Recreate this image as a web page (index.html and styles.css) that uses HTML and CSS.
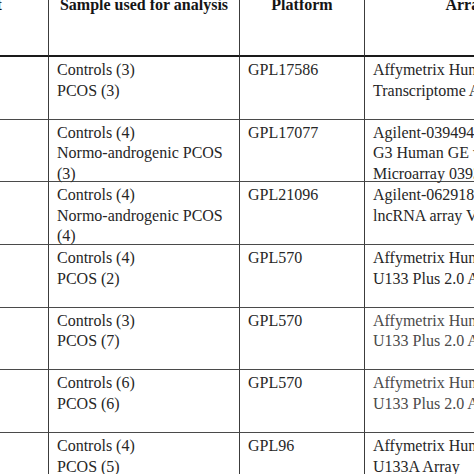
FILE: index.html
```html
<!DOCTYPE html>
<html lang="en">
<head>
<meta charset="utf-8">
<title>Datasets</title>
<link rel="stylesheet" href="styles.css">
</head>
<body>
<div class="table">
  <div class="cell head">Dataset</div>
  <div class="cell head">Sample used for analysis</div>
  <div class="cell head">Platform</div>
  <div class="cell head last">Array type</div>

  <div class="cell"></div>
  <div class="cell">Controls (3)<br>PCOS (3)</div>
  <div class="cell">GPL17586</div>
  <div class="cell last">Affymetrix Human<br>Transcriptome Array 2.0</div>

  <div class="cell"></div>
  <div class="cell">Controls (4)<br>Normo-androgenic PCOS<br>(3)</div>
  <div class="cell">GPL17077</div>
  <div class="cell last">Agilent-039494 SurePrint<br>G3 Human GE v2 8x60K<br>Microarray 039381</div>

  <div class="cell"></div>
  <div class="cell">Controls (4)<br>Normo-androgenic PCOS<br>(4)</div>
  <div class="cell">GPL21096</div>
  <div class="cell last">Agilent-062918 OE<br>lncRNA array V4.1</div>

  <div class="cell"></div>
  <div class="cell">Controls (4)<br>PCOS (2)</div>
  <div class="cell">GPL570</div>
  <div class="cell last">Affymetrix Human Genome<br>U133 Plus 2.0 Array</div>

  <div class="cell"></div>
  <div class="cell">Controls (3)<br>PCOS (7)</div>
  <div class="cell">GPL570</div>
  <div class="cell last light">Affymetrix Human Genome<br>U133 Plus 2.0 Array</div>

  <div class="cell"></div>
  <div class="cell">Controls (6)<br>PCOS (6)</div>
  <div class="cell">GPL570</div>
  <div class="cell last light">Affymetrix Human Genome<br>U133 Plus 2.0 Array</div>

  <div class="cell"></div>
  <div class="cell">Controls (4)<br>PCOS (5)</div>
  <div class="cell">GPL96</div>
  <div class="cell last">Affymetrix Human Genome<br>U133A Array</div>
</div>
</body>
</html>
```

FILE: styles.css
```css
html, body {
  margin: 0;
  padding: 0;
  background: #ffffff;
  overflow: hidden;
  width: 474px;
  height: 474px;
}

.table {
  display: grid;
  grid-template-columns: 145px 191px 125px 236px;
  grid-template-rows: 64px repeat(7, 62.7px);
  margin: -7px 0 0 -96px;
  width: 697px;
  font-family: "Liberation Serif", "Times New Roman", serif;
  font-size: 16px;
  line-height: 20.5px;
  color: #262626;
}

.cell {
  box-sizing: border-box;
  padding: 3px 8px 0 8px;
  border-right: 1px solid #3c3c3c;
  border-bottom: 1px solid #4a4a4a;
  white-space: nowrap;
  overflow: visible;
}

.cell.last {
  border-right: none;
}

.cell.light {
  color: #4a4a4a;
}

.cell.head {
  font-weight: bold;
  text-align: center;
  color: #151515;
  padding-top: 2px;
  border-bottom: 2px solid #1a1a1a;
}
```
